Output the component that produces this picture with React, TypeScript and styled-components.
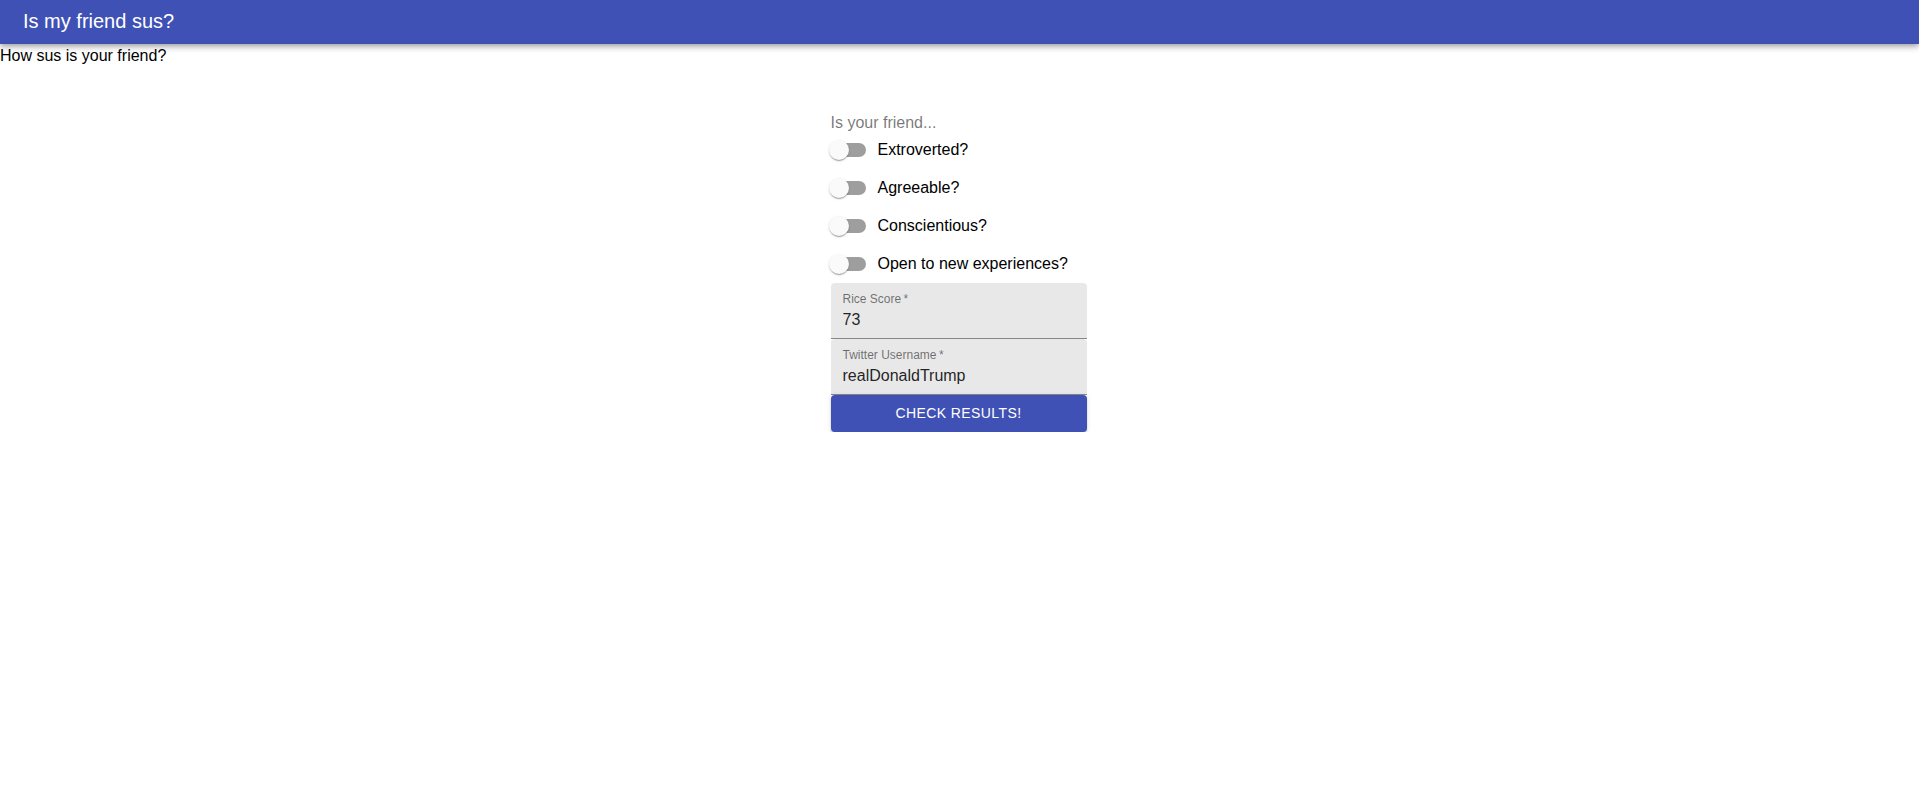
import styled, { createGlobalStyle } from "styled-components";

const GlobalStyle = createGlobalStyle`
  body {
    margin: 0;
    font-family: "Liberation Sans", Arial, sans-serif;
    color: #000;
    background: #fff;
  }
`;

const AppBar = styled.header`
  display: flex;
  align-items: center;
  height: 44px;
  padding: 0 23px 3px;
  box-sizing: border-box;
  background: #3f51b5;
  color: #fff;
  box-shadow: 0px 2px 4px -1px rgba(0, 0, 0, 0.2), 0px 4px 5px 0px rgba(0, 0, 0, 0.14),
    0px 1px 10px 0px rgba(0, 0, 0, 0.12);
`;

const Title = styled.h6`
  margin: 0;
  font-size: 20px;
  font-weight: 400;
  line-height: 1.6;
`;

const Intro = styled.p`
  margin: 0;
  font-size: 16px;
  line-height: 1.5;
`;

const Form = styled.form`
  display: flex;
  flex-direction: column;
  width: 256px;
  margin: 47px 0 0 calc(50% - 129px);
`;

const Legend = styled.div`
  font-size: 16px;
  line-height: 1;
  color: rgba(0, 0, 0, 0.54);
`;

const SwitchRow = styled.label`
  display: flex;
  align-items: center;
  margin-left: -11px;
  height: 38px;
  font-size: 16px;
  cursor: pointer;
`;

const SwitchRoot = styled.span`
  position: relative;
  display: inline-flex;
  flex-shrink: 0;
  width: 58px;
  height: 38px;
  padding: 12px;
  box-sizing: border-box;
`;

const Track = styled.span<{ $on: boolean }>`
  width: 34px;
  height: 14px;
  border-radius: 7px;
  background: ${(p) => (p.$on ? "#3f51b5" : "#000")};
  opacity: ${(p) => (p.$on ? 0.5 : 0.38)};
`;

const Thumb = styled.span<{ $on: boolean }>`
  position: absolute;
  top: 9px;
  left: ${(p) => (p.$on ? "29px" : "9px")};
  width: 20px;
  height: 20px;
  border-radius: 50%;
  background: ${(p) => (p.$on ? "#3f51b5" : "#fafafa")};
  box-shadow: 0px 2px 1px -1px rgba(0, 0, 0, 0.2), 0px 1px 1px 0px rgba(0, 0, 0, 0.14),
    0px 1px 3px 0px rgba(0, 0, 0, 0.12);
`;

const Field = styled.div`
  position: relative;
  height: 56px;
  box-sizing: border-box;
  background: rgba(0, 0, 0, 0.09);
  border-radius: 4px 4px 0 0;
  border-bottom: 1px solid rgba(0, 0, 0, 0.42);
`;

const FieldLabel = styled.label`
  position: absolute;
  top: 10px;
  left: 12px;
  font-size: 12px;
  line-height: 1;
  color: rgba(0, 0, 0, 0.54);
`;

const Input = styled.input`
  display: block;
  width: 100%;
  box-sizing: border-box;
  padding: 27px 12px 9px;
  border: 0;
  margin: 0;
  background: transparent;
  font: inherit;
  font-size: 16px;
  line-height: 19px;
  height: 55px;
  color: rgba(0, 0, 0, 0.87);
  outline: none;
`;

const SubmitButton = styled.button`
  height: 36.5px;
  padding: 6px 16px;
  border: 0;
  border-radius: 4px;
  background: #3f51b5;
  color: #fff;
  font-family: inherit;
  font-size: 14px;
  font-weight: 500;
  line-height: 1.75;
  letter-spacing: 0.02857em;
  text-transform: uppercase;
  cursor: pointer;
  box-shadow: 0px 3px 1px -2px rgba(0, 0, 0, 0.2), 0px 2px 2px 0px rgba(0, 0, 0, 0.14),
    0px 1px 5px 0px rgba(0, 0, 0, 0.12);
`;

const traits = ["Extroverted?", "Agreeable?", "Conscientious?", "Open to new experiences?"];

const fields = [
  { label: "Rice Score", value: "73" },
  { label: "Twitter Username", value: "realDonaldTrump" },
];

export default function App() {
  return (
    <>
      <GlobalStyle />
      <AppBar>
        <Title>Is my friend sus?</Title>
      </AppBar>
      <Intro>How sus is your friend?</Intro>
      <Form onSubmit={(e) => e.preventDefault()}>
        <Legend>Is your friend...</Legend>
        {traits.map((trait) => (
          <SwitchRow key={trait}>
            <SwitchRoot>
              <Track $on={false} />
              <Thumb $on={false} />
            </SwitchRoot>
            {trait}
          </SwitchRow>
        ))}
        {fields.map((field) => (
          <Field key={field.label}>
            <FieldLabel>{field.label}{"\u2009*"}</FieldLabel>
            <Input defaultValue={field.value} required />
          </Field>
        ))}
        <SubmitButton type="submit">Check Results!</SubmitButton>
      </Form>
    </>
  );
}
